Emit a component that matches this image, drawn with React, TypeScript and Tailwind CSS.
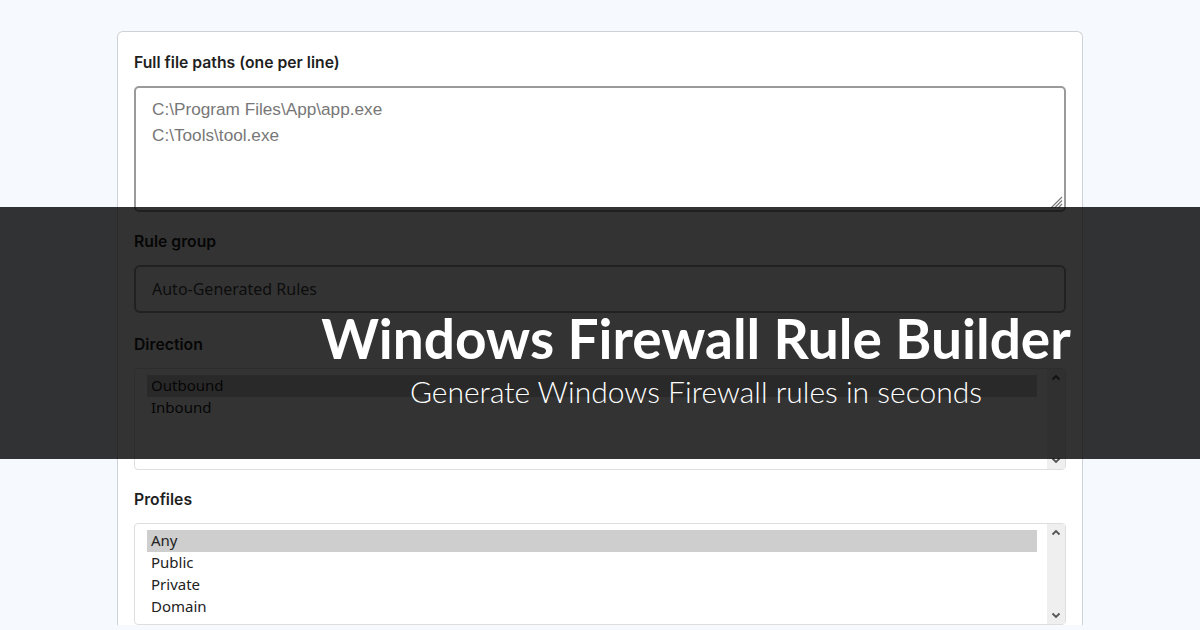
import React from "react";

function Chevron({ up }: { up?: boolean }) {
  return (
    <svg width="10" height="7" viewBox="0 0 10 7" className="block">
      <path
        d={up ? "M1.5 5.5 L5 2 L8.5 5.5" : "M1.5 1.5 L5 5 L8.5 1.5"}
        fill="none"
        stroke="#555"
        strokeWidth="1.8"
      />
    </svg>
  );
}

function ListBox({ options, selected }: { options: string[]; selected: number }) {
  return (
    <div className="flex h-[102px] rounded-[4px] border border-[#dedede] bg-white">
      <div className="flex flex-1 flex-col pl-3 pr-[10px] pt-[6px]">
        {options.map((o, i) => (
          <div
            key={o}
            className={
              "h-[22px] pl-1 text-[15px] leading-[20px] text-[#222] " +
              (i === selected ? "bg-[#cecece]" : "")
            }
          >
            {o}
          </div>
        ))}
      </div>
      <div className="flex w-[18px] flex-col items-center justify-between bg-[#efefef] py-[5px]">
        <Chevron up />
        <Chevron />
      </div>
    </div>
  );
}

export default function App() {
  const label = "text-[15.75px] font-semibold text-[#1f1f1f] leading-[20px]";
  return (
    <div
      className="relative h-[630px] w-[1200px] overflow-hidden bg-[#f6f9fd] pt-[31px]"
      style={{ fontFamily: "'Noto Sans', sans-serif" }}
    >
      <div className="mx-auto w-[966px] rounded-t-[6px] border border-b-0 border-[#cdd2d8] bg-white px-4 pt-[21px]">
        <div className={label} style={{ fontFamily: "Inter, sans-serif" }}>
          Full file paths (one per line)
        </div>
        <div className="relative mt-[13px] h-[126px] rounded-[5px] border-2 border-[#9a9a9a] px-4 pt-[8px]">
          <div
            className="text-[17.2px] leading-[26px] text-[#777]"
            style={{ fontFamily: "'Liberation Sans', Arial, sans-serif" }}
          >
            <div>C:\Program Files\App\app.exe</div>
            <div>C:\Tools\tool.exe</div>
          </div>
          <svg
            width="14"
            height="14"
            viewBox="0 0 14 14"
            className="absolute bottom-[1px] right-[1px]"
          >
            <path
              d="M13 2 L2 13 M13 5.5 L5.5 13 M13 9 L9 13"
              stroke="#777"
              strokeWidth="1.1"
              fill="none"
            />
          </svg>
        </div>

        <div className={"mt-[20px] " + label} style={{ fontFamily: "Inter, sans-serif" }}>
          Rule group
        </div>
        <div className="mt-[13px] flex h-[48px] items-center rounded-[6px] border-2 border-[#a3a3a3] px-4 text-[16px] text-[#444]">
          Auto-Generated Rules
        </div>

        <div className={"mt-[22px] " + label} style={{ fontFamily: "Inter, sans-serif" }}>
          Direction
        </div>
        <div className="mt-[13px]">
          <ListBox options={["Outbound", "Inbound"]} selected={0} />
        </div>

        <div className={"mt-[20px] " + label} style={{ fontFamily: "Inter, sans-serif" }}>
          Profiles
        </div>
        <div className="mt-[13px]">
          <ListBox options={["Any", "Public", "Private", "Domain"]} selected={0} />
        </div>
      </div>

      <div
        className="absolute inset-x-0 top-[207px] flex h-[252px] flex-col items-center bg-[rgba(0,0,0,0.8)] pl-[192px] pt-[101px] text-white"
        style={{ fontFamily: "Lato, sans-serif" }}
      >
        <div className="text-[55px] font-bold leading-[60px]">Windows Firewall Rule Builder</div>
        <div className="mt-[5px] text-[30px] font-light leading-[36px]">
          Generate Windows Firewall rules in seconds
        </div>
      </div>
    </div>
  );
}
